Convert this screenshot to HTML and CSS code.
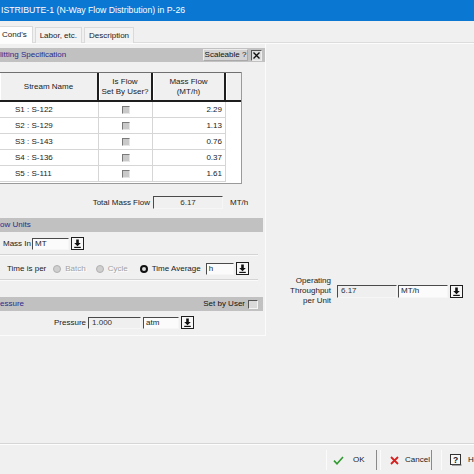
FILE: index.html
```html
<!DOCTYPE html>
<html>
<head>
<meta charset="utf-8">
<link rel="stylesheet" href="styles.css">
</head>
<body>
<div class="window">
  <div class="titlebar"><span class="title">ISTRIBUTE-1 (N-Way Flow Distribution) in P-26</span></div>
  <div class="tabstrip">
    <div class="tab active">Cond's</div>
    <div class="tab">Labor, etc.</div>
    <div class="tab">Description</div>
  </div>
  <div class="content">
    <div class="leftpanel">
      <div class="sec sec-split">
        <span class="sec-title">litting Specification</span>
        <span class="scaleable">Scaleable ?</span>
        <span class="xbox"><svg width="9" height="9" viewBox="0 0 9 9"><path d="M1.5 1.5l6 6M7.5 1.5l-6 6" stroke="#111" stroke-width="1.4"/></svg></span>
      </div>

      <div class="grid">
        <div class="grid-head">
          <div class="hc">Stream Name</div>
          <div class="hc">Is Flow<br>Set By User?</div>
          <div class="hc">Mass Flow<br>(MT/h)</div>
          <div class="hc last"></div>
        </div>
        <div class="grid-body">
          <div class="grid-row"><div class="dc name">S1 : S-122</div><div class="dc chkcell"><span class="dchk"></span></div><div class="dc num">2.29</div><div class="dc empty"></div></div>
          <div class="grid-row"><div class="dc name">S2 : S-129</div><div class="dc chkcell"><span class="dchk"></span></div><div class="dc num">1.13</div><div class="dc empty"></div></div>
          <div class="grid-row"><div class="dc name">S3 : S-143</div><div class="dc chkcell"><span class="dchk"></span></div><div class="dc num">0.76</div><div class="dc empty"></div></div>
          <div class="grid-row"><div class="dc name">S4 : S-136</div><div class="dc chkcell"><span class="dchk"></span></div><div class="dc num">0.37</div><div class="dc empty"></div></div>
          <div class="grid-row"><div class="dc name">S5 : S-111</div><div class="dc chkcell"><span class="dchk"></span></div><div class="dc num">1.61</div><div class="dc empty"></div></div>
        </div>
      </div>

      <div class="total-row">
        <span class="total-label">Total Mass Flow</span>
        <span class="field total-field">6.17</span>
        <span class="unit">MT/h</span>
      </div>

      <div class="sec sec-flow"><span class="sec-title">ow Units</span></div>

      <div class="mass-row">
        <span class="mass-label">Mass In</span>
        <span class="combo mass-combo">MT</span>
        <span class="ddbtn"><svg width="13" height="13" viewBox="0 0 13 13"><rect x="0.5" y="0.5" width="12" height="12" fill="#f7f7f7" stroke="#1e1e1e"/><path d="M5.2 2.5h2.6v3.4h2l-3.3 3.3-3.3-3.3h2z" fill="#111"/><rect x="3.2" y="9.8" width="6.6" height="1.2" fill="#111"/></svg></span>
      </div>

      <div class="time-group">
        <div class="time-row">
          <span class="time-label">Time is per</span>
          <span class="radio off r-batch"></span><span class="rlabel disabled">Batch</span>
          <span class="radio off r-cycle"></span><span class="rlabel disabled">Cycle</span>
          <span class="radio on r-avg"></span><span class="rlabel">Time Average</span>
          <span class="combo h-combo">h</span>
          <span class="ddbtn"><svg width="13" height="13" viewBox="0 0 13 13"><rect x="0.5" y="0.5" width="12" height="12" fill="#f7f7f7" stroke="#1e1e1e"/><path d="M5.2 2.5h2.6v3.4h2l-3.3 3.3-3.3-3.3h2z" fill="#111"/><rect x="3.2" y="9.8" width="6.6" height="1.2" fill="#111"/></svg></span>
        </div>
      </div>

      <div class="sec sec-press">
        <span class="sec-title">essure</span>
        <span class="setby">Set by User</span>
        <span class="sbox"></span>
      </div>

      <div class="press-row">
        <span class="press-label">Pressure</span>
        <span class="field press-field">1.000</span>
        <span class="combo press-combo">atm</span>
        <span class="ddbtn"><svg width="13" height="13" viewBox="0 0 13 13"><rect x="0.5" y="0.5" width="12" height="12" fill="#f7f7f7" stroke="#1e1e1e"/><path d="M5.2 2.5h2.6v3.4h2l-3.3 3.3-3.3-3.3h2z" fill="#111"/><rect x="3.2" y="9.8" width="6.6" height="1.2" fill="#111"/></svg></span>
      </div>
    </div>

    <div class="rightpanel">
      <div class="thru-row">
        <div class="thru-label">Operating<br>Throughput<br>per Unit</div>
        <span class="field thru-field">6.17</span>
        <span class="combo thru-combo">MT/h</span>
        <span class="ddbtn"><svg width="13" height="13" viewBox="0 0 13 13"><rect x="0.5" y="0.5" width="12" height="12" fill="#f7f7f7" stroke="#1e1e1e"/><path d="M5.2 2.5h2.6v3.4h2l-3.3 3.3-3.3-3.3h2z" fill="#111"/><rect x="3.2" y="9.8" width="6.6" height="1.2" fill="#111"/></svg></span>
      </div>
    </div>
  </div>

  <div class="footer">
    <div class="btn btn-ok"><svg class="ico" width="11" height="9" viewBox="0 0 11 9"><path d="M1 4.6l3 3.2L10 1" fill="none" stroke="#2f9a2f" stroke-width="1.6"/></svg><span>OK</span></div>
    <div class="btn btn-cancel"><svg class="ico" width="9" height="9" viewBox="0 0 9 9"><path d="M1 1l7 7M8 1l-7 7" stroke="#d62020" stroke-width="1.8"/></svg><span>Cancel</span></div>
    <div class="btn btn-help"><svg class="ico" width="12" height="12" viewBox="0 0 12 12"><rect x="0.5" y="0.5" width="10" height="10" fill="#f8f8f8" stroke="#333"/><rect x="2" y="10.5" width="9.5" height="1" fill="#555"/><text x="5.5" y="8.6" font-family="Liberation Sans, Arial, sans-serif" font-size="8.5" font-weight="bold" text-anchor="middle" fill="#222">?</text></svg><span>Help</span></div>
  </div>
</div>
</body>
</html>
```
FILE: styles.css
```css
* { box-sizing: border-box; margin: 0; padding: 0; }
html, body { width: 474px; height: 474px; overflow: hidden; }
body {
  background: #f0f0f0;
  font-family: "Liberation Sans", Arial, sans-serif;
  font-size: 8px;
  line-height: 1;
  color: #1b1b1b;
}
.window {
  width: 474px;
  height: 474px;
  display: flex;
  flex-direction: column;
  overflow: hidden;
}

/* title bar */
.titlebar {
  height: 21px;
  flex: none;
  background: #0a77d3;
  color: #fff;
  font-size: 8.7px;
  display: flex;
  align-items: center;
  white-space: nowrap;
  padding-left: 1px;
}

/* tabs */
.tabstrip {
  height: 23px;
  flex: none;
  display: flex;
  align-items: flex-end;
  gap: 2px;
  border-bottom: 1px solid #fcfcfc;
  box-shadow: 0 -1px 0 #dcdcdc inset;
}
.tab {
  height: 16px;
  display: flex;
  align-items: center;
  padding: 0 4px;
  background: #f3f3f3;
  border: 1px solid #dadada;
  border-bottom: none;
  white-space: nowrap;
}
.tab.active {
  background: #fdfdfd;
  height: 17px;
  padding: 0 5px 0 2px;
  border-left: none;
}

/* content */
.content {
  height: 399px;
  flex: none;
  display: flex;
}
.leftpanel {
  width: 266px;
  height: 292px;
  flex: none;
  border-right: 1px solid #fbfbfb;
  border-bottom: 1px solid #fbfbfb;
  display: flex;
  flex-direction: column;
}
.rightpanel {
  flex: 1;
  padding-top: 232px;
}

/* section headers */
.sec {
  width: 263px;
  height: 14px;
  flex: none;
  background: #c1c1c1;
  color: #2b2b8c;
  display: flex;
  align-items: center;
  white-space: nowrap;
}
.sec-split { margin-top: 4px; width: 265px; }
.sec-flow { margin-top: 9px; }
.sec-press { margin-top: 17px; padding-right: 5px; }
.scaleable {
  margin-left: auto;
  width: 45px;
  height: 12px;
  display: flex;
  align-items: center;
  justify-content: center;
  background: #d3d3d3;
  color: #111;
  border: 1px solid #a9a9a9;
  border-top-color: #ececec;
  border-left-color: #ececec;
}
.xbox {
  width: 11px;
  height: 11px;
  margin-left: 3px;
  margin-right: 3px;
  background: #dedede;
  border: 1px solid #ededed;
  border-top-color: #555;
  border-left-color: #555;
  display: flex;
  align-items: center;
  justify-content: center;
}
.setby { margin-left: auto; color: #111; }
.sbox {
  width: 10px;
  height: 9px;
  margin-left: 3px;
  background: #dadada;
  border: 1px solid #f4f4f4;
  border-top-color: #555;
  border-left-color: #555;
}

/* grid */
.grid {
  width: 242px;
  margin-top: 10px;
  flex: none;
  border-right: 1px solid #9a9a9a;
  border-bottom: 1px solid #9a9a9a;
  background: #fff;
}
.grid-head, .grid-row {
  display: grid;
  grid-template-columns: 99px 54px 73px 15px;
}
.grid-head {
  height: 30px;
  background: #f0f0f0;
  border-top: 1px solid #707070;
  border-bottom: 2px solid #1e1e1e;
}
.hc {
  display: flex;
  align-items: center;
  justify-content: center;
  text-align: center;
  line-height: 10px;
  border-right: 2px solid #1e1e1e;
  box-shadow: inset 1px 0 0 #ffffff;
}
.hc.last { border-right: none; }
.grid-body { padding-bottom: 1px; }
.grid-row { height: 16px; }
.dc {
  display: flex;
  align-items: center;
  border-right: 1px solid #d6d6d6;
  border-bottom: 1px solid #d6d6d6;
}
.dc.name { padding-left: 15px; }
.dc.chkcell { justify-content: center; }
.dc.num { justify-content: flex-end; padding-right: 3px; }
.dc.empty { border: none; }
.dchk {
  width: 8px;
  height: 8px;
  background: #c9c9c9;
  border: 1px solid #e6e6e6;
  border-top-color: #7a7a7a;
  border-left-color: #7a7a7a;
}

/* inputs */
.field, .combo {
  height: 12px;
  display: flex;
  align-items: center;
  border: 1px solid #f6f6f6;
  border-top-color: #4a4a4a;
  border-left-color: #4a4a4a;
  white-space: nowrap;
}
.field { background: #efefef; color: #333; padding-left: 3px; }
.combo { background: #fbfbfb; padding-left: 2px; }
.ddbtn { display: flex; width: 13px; height: 13px; margin-left: 2px; }

.total-row {
  margin-top: 12px;
  height: 13px;
  display: flex;
  align-items: center;
  padding-left: 88px;
}
.total-label { width: 62px; text-align: right; margin-right: 3px; }
.total-field { width: 70px; height: 13px; justify-content: center; padding-left: 0; background: #f0f0f0; }
.unit { margin-left: 7px; }

.mass-row {
  margin-top: 5px;
  height: 13px;
  display: flex;
  align-items: center;
  padding-left: 3px;
}
.mass-label { margin-right: 1px; }
.mass-combo { width: 37px; }

.time-group {
  width: 258px;
  margin-top: 4px;
  border-top: 1px solid #d4d4d4;
  border-bottom: 1px solid #d4d4d4;
  box-shadow: inset 0 1px 0 #fafafa, 0 1px 0 #fafafa;
  padding: 7px 0 4px;
}
.time-row {
  height: 13px;
  display: flex;
  align-items: center;
  padding-left: 7px;
  white-space: nowrap;
}
.radio {
  width: 8px;
  height: 8px;
  border-radius: 50%;
  flex: none;
}
.radio.off { background: #cfcfcf; border: 1px solid #b0b0b0; }
.radio.on { background: #dcdcdc; border: 2px solid #111; }
.r-batch { margin-left: 7px; }
.r-cycle { margin-left: 10px; }
.r-avg { margin-left: 12px; }
.rlabel { margin-left: 4px; }
.rlabel.disabled { color: #a2a2a2; text-shadow: 1px 1px 0 #ffffff; }
.h-combo { width: 28px; margin-left: 5px; }

.press-row {
  margin-top: 5px;
  height: 13px;
  display: flex;
  align-items: center;
  padding-left: 54px;
}
.press-label { margin-right: 2px; }
.press-field { width: 53px; }
.press-combo { width: 36px; margin-left: 2px; }

/* right side */
.thru-row {
  display: flex;
  align-items: center;
  padding-left: 5px;
}
.thru-label { width: 60px; text-align: right; line-height: 10px; }
.thru-field { width: 60px; margin-left: 6px; height: 13px; }
.thru-combo { width: 50px; margin-left: 1px; height: 13px; }

/* footer */
.footer {
  flex: 1;
  border-top: 1px solid #d6d6d6;
  box-shadow: inset 0 1px 0 #fdfdfd;
  display: flex;
  align-items: flex-start;
  padding: 6px 0 0 326px;
  overflow: hidden;
}
.btn {
  height: 20px;
  flex: none;
  display: flex;
  align-items: center;
  border-left: 1px solid #fbfbfb;
  border-right: 1px solid #8a8a8a;
  white-space: nowrap;
}
.btn-ok { width: 51px; padding-left: 6px; }
.btn-ok span { margin-left: 9px; }
.btn-cancel { width: 52px; margin-left: 3px; padding-left: 9px; }
.btn-cancel span { margin-left: 6px; }
.btn-help { width: 50px; margin-left: 9px; padding-left: 8px; }
.btn-help span { margin-left: 6px; }
.ico { flex: none; }
```
